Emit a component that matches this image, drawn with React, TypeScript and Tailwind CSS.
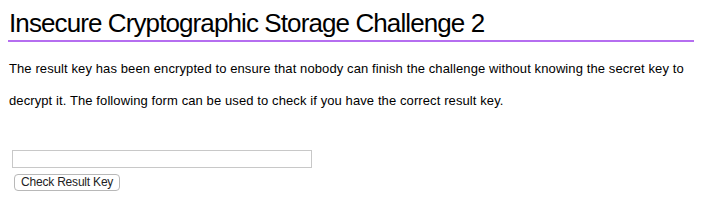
import React from 'react';

const App: React.FC = () => {
  return (
    <div className="w-[710px] h-[203px] bg-white text-black font-['Liberation_Sans',Arial,sans-serif] overflow-hidden">
      <div className="pl-2 pr-4">
        <h1 className="pt-[8px] text-[26px] leading-[30px] tracking-[-0.9px] pl-px">
          Insecure Cryptographic Storage Challenge 2
        </h1>
        <div className="mt-[2px] h-[2px] bg-[#b56ef0]" />
        <p className="mt-[11px] text-[13px] leading-[32px] tracking-[0.1px] pl-px">
          The result key has been encrypted to ensure that nobody can finish the challenge without knowing the secret key to decrypt it. The following form can be used to check if you have the correct result key.
        </p>
        <form className="mt-[33px] pl-1 flex flex-col items-start gap-[6px]">
          <input
            type="text"
            className="w-[300px] h-[18px] border border-[#c8c8c8] bg-white outline-none"
          />
          <button
            type="button"
            className="ml-[2px] h-[17px] px-[6px] text-[12px] leading-[15px] tracking-[-0.2px] border border-[#b8b8b8] rounded-[4px] bg-white text-[#222]"
          >
            Check Result Key
          </button>
        </form>
      </div>
    </div>
  );
};

export default App;
